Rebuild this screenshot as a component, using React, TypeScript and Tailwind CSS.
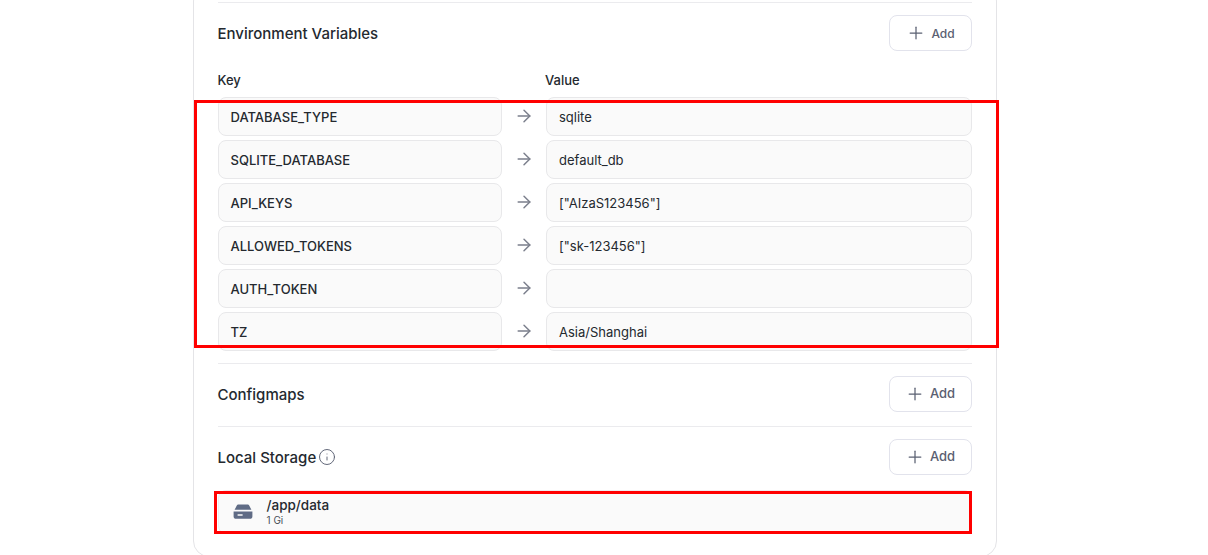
import { ReactNode } from "react"
import { ArrowRight, Info, Plus } from "lucide-react"

const envs = [
  { k: "DATABASE_TYPE", v: "sqlite" },
  { k: "SQLITE_DATABASE", v: "default_db" },
  { k: "API_KEYS", v: '["AIzaS123456"]' },
  { k: "ALLOWED_TOKENS", v: '["sk-123456"]' },
  { k: "AUTH_TOKEN", v: "" },
  { k: "TZ", v: "Asia/Shanghai" },
]

function AddButton({ small }: { small?: boolean }) {
  return (
    <button className={small ? "flex h-9 w-[83px] items-center justify-center gap-[5px] rounded-lg border border-[#e2e3ec] bg-white text-[#5a6072]" : "flex h-9 w-[83px] items-center justify-center gap-[5px] rounded-lg border border-[#e2e3ec] bg-white pr-[1px] text-[#5a6072]"}>
      <Plus size={20} strokeWidth={1.5} className="text-[#5a6072]" />
      <span className={small ? "mt-[1px] text-[12px] font-medium" : "text-[13px] font-medium"}>Add</span>
    </button>
  )
}

function SectionHead({ children, small }: { children: ReactNode; small?: boolean }) {
  return (
    <div className="flex items-center justify-between pb-[14px] pt-3">
      <div className="flex items-center gap-[2px] text-[15px] font-medium text-[#24292f]">{children}</div>
      <AddButton small={small} />
    </div>
  )
}

function DiskIcon() {
  return (
    <svg width="20" height="20" viewBox="0 0 20 20" fill="#5f6b85">
      <path d="M5.2 2.6h9.6c.6 0 1.1.3 1.4.8l2.2 4.4H1.6l2.2-4.4c.3-.5.8-.8 1.4-.8z" />
      <path d="M.6 9.4h18.8v5c0 1.4-1 2.4-2.4 2.4H3c-1.4 0-2.4-1-2.4-2.4v-5zm4 2.8v1.5h5v-1.5h-5z" fillRule="evenodd" />
    </svg>
  )
}

export default function App() {
  return (
    <div className="relative h-[555px] w-[1208px] overflow-hidden bg-white font-['Inter',sans-serif]">
      <div className="-mt-[15px] ml-[193px] h-[572px] w-[804px] rounded-2xl border border-[#e4e4e7] bg-white pl-[23.5px] pr-[24px] pt-[1px]">
        <div className="mt-[15px] border-t border-[#ebebee]">
          <SectionHead small>
            <span className="mt-[2px]">Environment Variables</span>
          </SectionHead>

          <div className="flex h-[32px] items-start pt-[6px] text-[13px] font-medium text-[#24292f]">
            <div className="w-[327.5px]">Key</div>
            <div>Value</div>
          </div>

          <div className="flex flex-col gap-[4px] border-b border-[#ebebee] pb-[12px]">
            {envs.map((e) => (
              <div key={e.k} className="flex items-center">
                <div className="flex h-[39px] w-[284.5px] items-center rounded-lg border border-[#e8e8ea] bg-[#fafafa] px-3 pt-[2px] text-[13px] font-medium text-[#24292f]">
                  {e.k}
                </div>
                <div className="flex w-[44px] justify-center text-[#7b7f8c]">
                  <ArrowRight size={20} strokeWidth={1.75} className="-mt-[2px]" />
                </div>
                <div className="flex h-[39px] flex-1 items-center rounded-lg border border-[#e8e8ea] bg-[#fafafa] px-3 pt-[2px] text-[13px] text-[#24292f]">
                  {e.v}
                </div>
              </div>
            ))}
          </div>

          <div className="border-b border-[#ebebee]">
            <SectionHead>
              <span className="mt-[2px]">Configmaps</span>
            </SectionHead>
          </div>

          <SectionHead>
            <span className="mt-[2px]">Local Storage</span>
            <Info size={18} strokeWidth={1.25} className="text-[#5a6072]" />
          </SectionHead>

          <div className="mt-[1px] flex h-[44px] items-center rounded-lg border border-[#ededf0] bg-[#fafafa] pl-[14px]">
            <DiskIcon />
            <div className="ml-[14px] flex flex-col">
              <span className="text-[13.5px] font-medium leading-[16px] text-[#24292f]">/app/data</span>
              <span className="text-[10px] leading-[14px] text-[#485058]">1 Gi</span>
            </div>
          </div>
        </div>
      </div>

      <div className="absolute left-[194px] top-[100px] h-[248px] w-[805px] border-[3px] border-[#ff0000]" />
      <div className="absolute left-[214px] top-[491px] h-[43px] w-[758px] border-[3px] border-[#ff0000]" />
    </div>
  )
}
